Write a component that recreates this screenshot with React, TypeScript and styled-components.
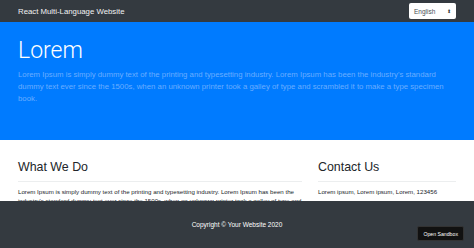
import styled, { createGlobalStyle } from 'styled-components';

const GlobalStyle = createGlobalStyle`
  body {
    margin: 0;
    font-family: "Liberation Sans", Arial, sans-serif;
    background: #fff;
    color: #212529;
  }
`;

// --------------  Elements
const Navbar = styled.nav`
  height: 22px;
  background: #343a40;
  display: flex;
  align-items: center;
  justify-content: space-between;
  padding: 0 18px;
`;
const Brand = styled.span`
  color: #f2f2f2;
  font-size: 7.8px;
`;
const LangSelect = styled.div`
  width: 47px;
  height: 16px;
  box-sizing: border-box;
  background: #fff;
  border-radius: 2px;
  display: flex;
  align-items: center;
  justify-content: space-between;
  padding: 0 5px;
  font-size: 6.5px;
  color: #495057;
`;
const Arrows = styled.span`
  font-size: 5px;
  color: #333;
`;
const Hero = styled.section`
  height: 118px;
  box-sizing: border-box;
  background: #007bff;
  padding: 14px 18px 0;
`;
const HeroTitle = styled.h1`
  margin: 0 0 4px;
  font-family: Roboto, "Liberation Sans", sans-serif;
  font-weight: 300;
  font-size: 23px;
  line-height: 29px;
  color: #fff;
`;
const HeroText = styled.p`
  margin: 0;
  font-size: 7.8px;
  line-height: 12px;
  color: #6aadff;
`;
const Content = styled.main`
  display: grid;
  grid-template-columns: 284px 138px;
  column-gap: 16px;
  padding: 18px 18px 80px;
`;
const Column = styled.div``;
const Heading = styled.h2`
  margin: 0;
  font-weight: 400;
  font-size: 12.4px;
  line-height: 18px;
  color: #212529;
`;
const Rule = styled.hr`
  margin: 5px 0 5px;
  border: 0;
  border-top: 1px solid #eceeef;
`;
const Text = styled.p`
  margin: 0;
  font-size: 6.15px;
  line-height: 9px;
  color: #212529;
`;
const Footer = styled.footer`
  position: fixed;
  left: 0;
  right: 0;
  bottom: 0;
  height: 47px;
  background: #343a40;
  display: flex;
  align-items: center;
  justify-content: center;
  color: #fff;
  font-size: 6.5px;
`;
const SandboxButton = styled.button`
  position: fixed;
  right: 10px;
  bottom: 7px;
  height: 15px;
  padding: 0 5px;
  background: #111;
  color: #fff;
  border: 1px solid #333;
  border-radius: 2px;
  font-family: "Liberation Sans", Arial, sans-serif;
  font-size: 5.2px;
`;

// --------------  Functions
export default function App() {
    return (
        <>
            <GlobalStyle />
            <Navbar>
                <Brand>React Multi-Language Website</Brand>
                <LangSelect>
                    English
                    <Arrows>⬍</Arrows>
                </LangSelect>
            </Navbar>
            <Hero>
                <HeroTitle>Lorem</HeroTitle>
                <HeroText>
                    Lorem Ipsum is simply dummy text of the printing and typesetting industry. Lorem Ipsum has been the industry's standard dummy text ever since the 1500s, when an unknown printer took a galley of type and scrambled it to make a type specimen book.
                </HeroText>
            </Hero>
            <Content>
                <Column>
                    <Heading>What We Do</Heading>
                    <Rule />
                    <Text>
                        Lorem Ipsum is simply dummy text of the printing and typesetting industry. Lorem Ipsum has been the industry's standard dummy text ever since the 1500s, when an unknown printer took a galley of type and scrambled it to make a type specimen book.
                    </Text>
                </Column>
                <Column>
                    <Heading>Contact Us</Heading>
                    <Rule />
                    <Text>Lorem ipsum, Lorem ipsum, Lorem, 123456</Text>
                </Column>
            </Content>
            <Footer>Copyright © Your Website 2020</Footer>
            <SandboxButton>Open Sandbox</SandboxButton>
        </>
    )
}
